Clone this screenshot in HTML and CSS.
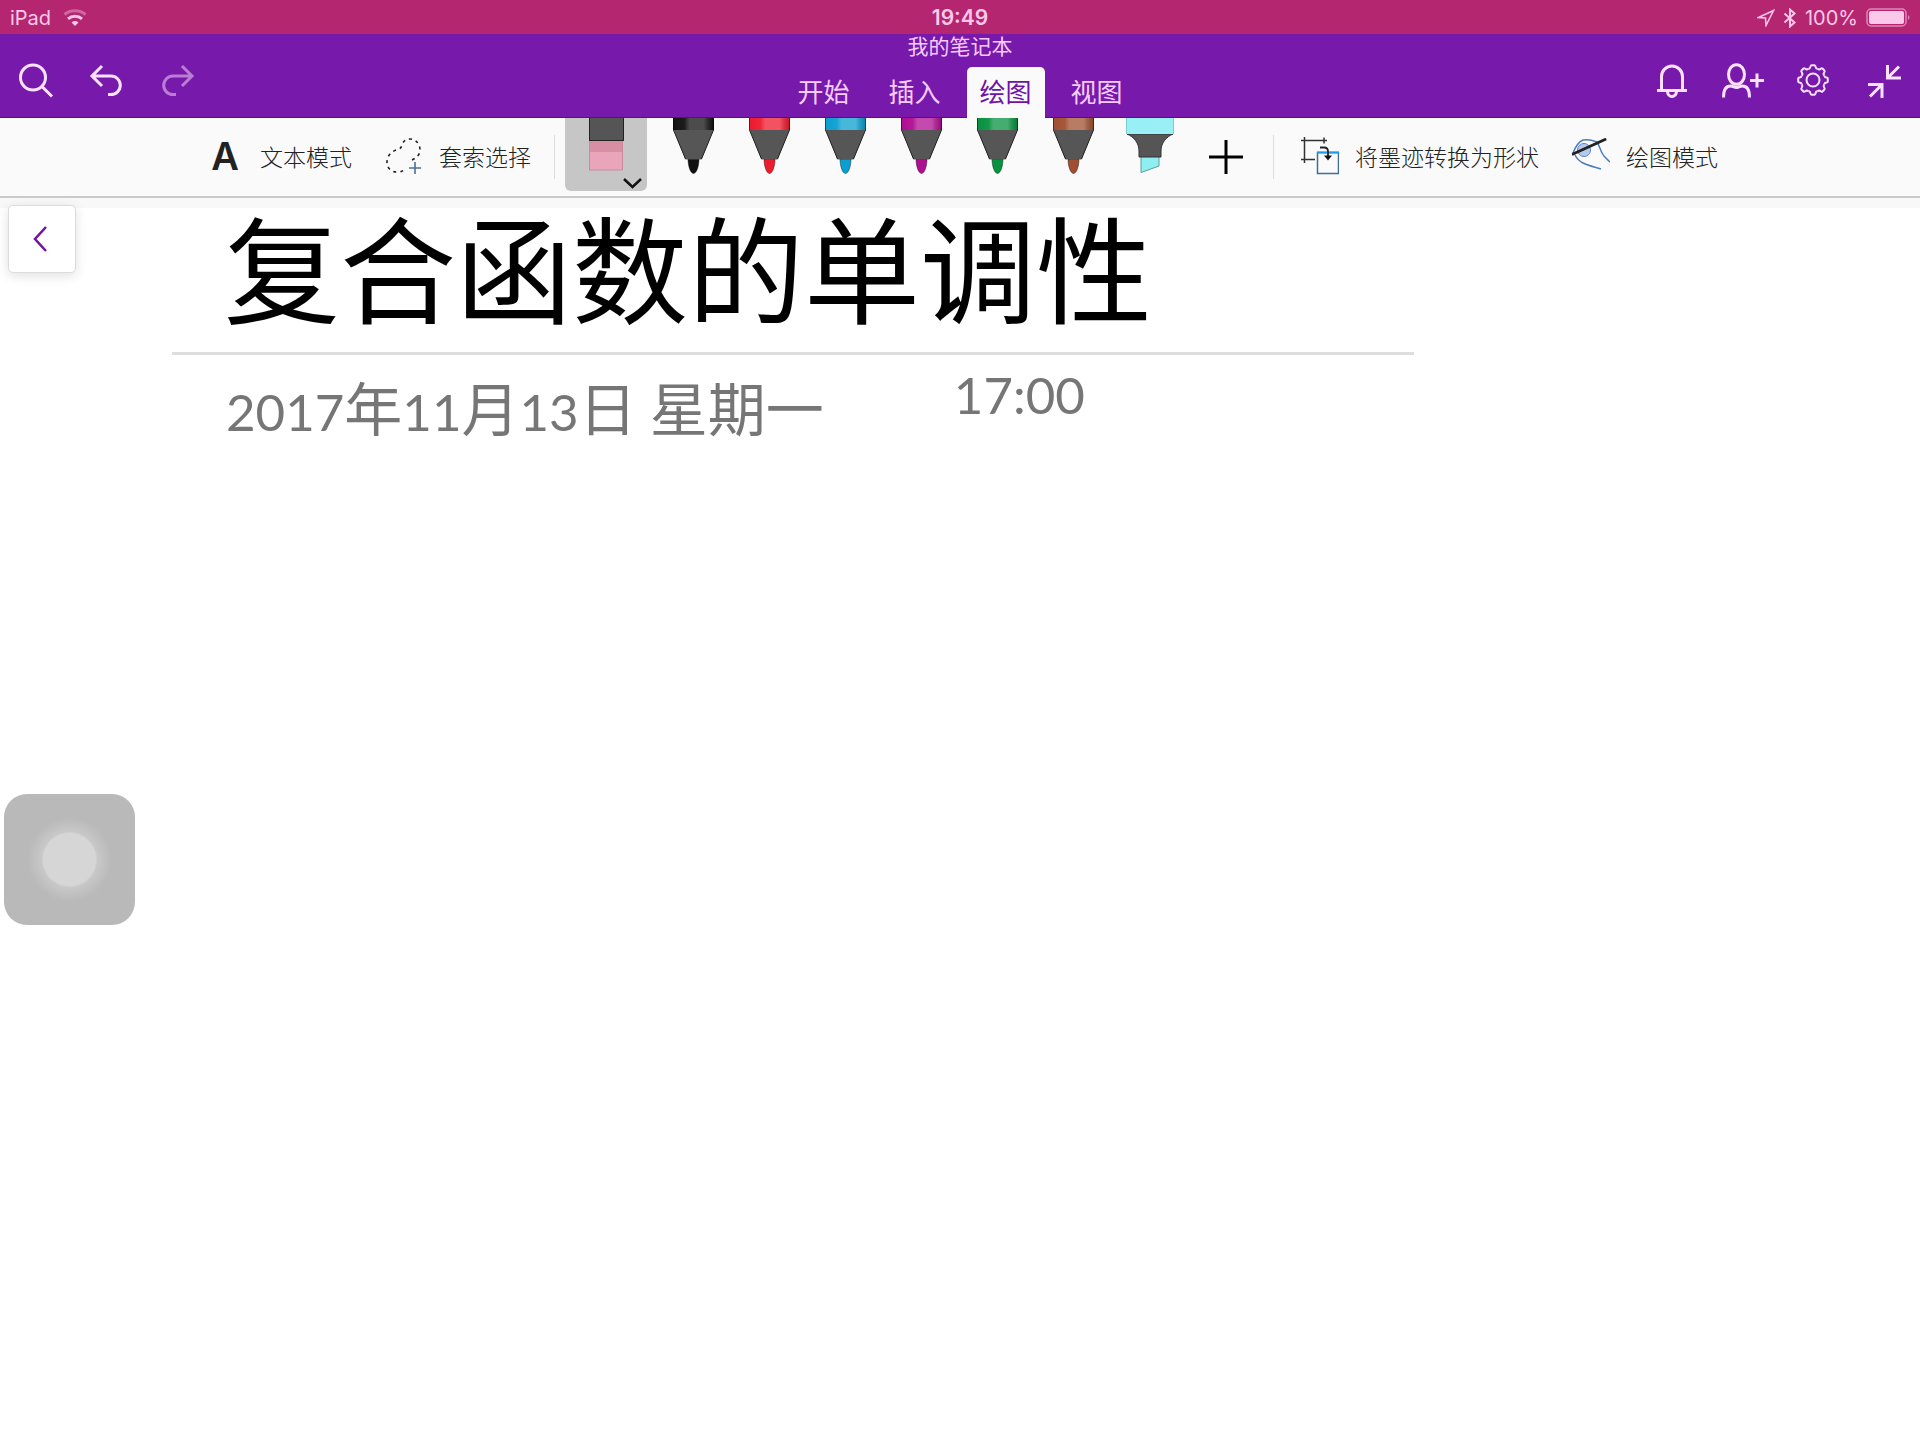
FILE: index.html
```
<!DOCTYPE html>
<html lang="zh-CN">
<head>
  <meta charset="UTF-8">
  <meta name="viewport" content="width=device-width, initial-scale=1.0">
  <title>我的笔记本</title>
  <link rel="stylesheet" href="styles.css">
</head>
<body>
  <svg class="defs" aria-hidden="true">
    <defs>
      <linearGradient id="shine">
        <stop offset="0" stop-color="#fff" stop-opacity="0"/>
        <stop offset="0.28" stop-color="#fff" stop-opacity="0.05"/>
        <stop offset="0.4" stop-color="#fff" stop-opacity="0.25"/>
        <stop offset="0.75" stop-color="#fff" stop-opacity="0.25"/>
        <stop offset="1" stop-color="#000" stop-opacity="0.15"/>
      </linearGradient>
      <symbol id="pen" viewBox="0 0 42 56">
        <path d="M15 41h11c0 6-2 14.500-5.500 14.500S15 47 15 41z" fill="currentColor" stroke="#000" stroke-opacity="0.4"/>
        <path d="M.5 12h40L28.500 41.500h-16z" fill="#565656"/>
        <path d="M.5 12l12 29M40.500 12l-12 29" stroke="#222" fill="none"/>
        <path d="M0 0h41v12H0z" fill="currentColor"/>
        <path d="M0 0h41v12H0z" fill="url(#shine)"/>
        <path d="M.5 0v12M40.500 0v12" stroke="#000" stroke-opacity="0.5"/>
      </symbol>
      <path id="tooth" d="M11.400 4.900Q13.300 4.500 13.500 2.500Q13.600 1.300 14.600 1.200H17.400Q18.400 1.300 18.500 2.500Q18.700 4.500 20.600 4.900"/>
    </defs>
  </svg>

  <div class="status">
    <div class="status-left">
      <span>iPad</span>
      <svg width="24" height="18" viewBox="0 0 24 18" fill="none" stroke="currentColor" stroke-width="3">
        <path d="M1.500 5.500C7.500.5 16.500.5 22.500 5.500" stroke-opacity="0.4"/>
        <path d="M5 9.800c4-3.500 10-3.500 14 0"/>
        <path d="M8.500 13.500Q12 10.600 15.500 13.500L12 17z" fill="currentColor" stroke="none"/>
      </svg>
    </div>
    <b class="clock">19:49</b>
    <div class="status-right">
      <svg width="18" height="18" viewBox="0 0 18 18" fill="none" stroke="currentColor" stroke-width="1.500"><path d="M16.500 1.500L1.500 8.500L8.500 9L9 16.500z"/></svg>
      <svg width="14" height="20" viewBox="0 0 14 20" fill="none" stroke="currentColor" stroke-width="2"><path d="M1.500 5.500l10 9L7 18.500v-17l4.500 4-10 9"/></svg>
      <span>100%</span>
      <svg width="44" height="20" viewBox="0 0 44 20">
        <rect x="1" y="1" width="39" height="17" rx="4" fill="none" stroke="currentColor" stroke-opacity="0.6" stroke-width="1.500"/>
        <rect x="3" y="3" width="35" height="13" rx="2" fill="currentColor"/>
        <path d="M42 7q3 2.500 0 5z" fill="currentColor" fill-opacity="0.6"/>
      </svg>
    </div>
  </div>

  <header>
    <div class="actions">
      <button aria-label="搜索">
        <svg width="36" height="36" viewBox="0 0 36 36"><circle cx="15" cy="14.500" r="12.500"/><path d="M24 23.500L34 33.500"/></svg>
      </button>
      <button aria-label="撤消">
        <svg width="36" height="36" viewBox="0 0 36 36"><path d="M13 3L3 13l10 10M3 13h19a9.300 9.300 0 0 1 0 18.600h-3"/></svg>
      </button>
      <button aria-label="恢复" disabled>
        <svg width="36" height="36" viewBox="0 0 36 36"><path d="M22 3l10 10-10 10M32 13H13a9.300 9.300 0 0 0 0 18.600h3"/></svg>
      </button>
    </div>
    <div class="center">
      <span class="notebook">我的笔记本</span>
      <nav>
        <a href="#home">开始</a>
        <a href="#insert">插入</a>
        <a href="#draw" class="active">绘图</a>
        <a href="#view">视图</a>
      </nav>
    </div>
    <div class="actions right">
      <button aria-label="通知">
        <svg width="32" height="34" viewBox="0 0 32 34"><path d="M5.500 26V12.500a10.500 10.500 0 0 1 21 0V26M1 26.500h30M11.500 27.500a4.500 5 0 0 0 9 0"/></svg>
      </button>
      <button aria-label="共享">
        <svg width="44" height="36" viewBox="0 0 44 36"><ellipse cx="15.500" cy="11.500" rx="8" ry="9.800"/><path d="M2.500 34.500c0-7 2.500-11.500 7-11.500 3 0 3 1.500 6 1.500s3-1.500 6-1.500c4.500 0 7 4.500 7 11.500M29 17.500h14M36 10.500v14"/></svg>
      </button>
      <button aria-label="设置">
        <svg class="thin" width="34" height="34" viewBox="0 0 34 34">
          <use href="#tooth"/>
          <use href="#tooth" transform="rotate(45 16 16)"/>
          <use href="#tooth" transform="rotate(90 16 16)"/>
          <use href="#tooth" transform="rotate(135 16 16)"/>
          <use href="#tooth" transform="rotate(180 16 16)"/>
          <use href="#tooth" transform="rotate(225 16 16)"/>
          <use href="#tooth" transform="rotate(270 16 16)"/>
          <use href="#tooth" transform="rotate(315 16 16)"/>
          <circle cx="16" cy="16" r="6.500"/>
        </svg>
      </button>
      <button aria-label="退出全屏">
        <svg width="36" height="36" viewBox="0 0 36 36"><path d="M20.500 2v13H34M21.500 14L32 3.500M1 21.500h14V35M14 22.500L3 33.500"/></svg>
      </button>
    </div>
  </header>

  <div class="toolbar">
    <button class="tool"><span class="letter">A</span>文本模式</button>
    <button class="tool">
      <svg width="38" height="38" viewBox="0 0 38 38" fill="none">
        <path d="M27 23c4-2 8-5 8-10 0-6-4-11-10-11-5 0-7 3-8 6-1 4-3 4-6 5-5 2-9 6-9 12 0 7 5 10 10 10 4 0 6-1 8-3" stroke="#222" stroke-width="1.600" stroke-dasharray="3 4"/>
        <path d="M30 25v12M24 31h12" stroke="#4d7193" stroke-width="1.600"/>
      </svg>套索选择
    </button>
    <span class="sep"></span>
    <button class="eraser" aria-label="橡皮擦">
      <svg width="82" height="73" viewBox="0 0 82 73">
        <path d="M24 22h34v30H24z" fill="#e9a6ba"/>
        <path d="M24 22h34v12H24z" fill="#d88ea3"/>
        <path d="M24.500 22v30h33V22" fill="none" stroke="#c98b9c"/>
        <path d="M24 0h35v23H24z" fill="#555"/>
        <path d="M24.500 0v22.500h34V0" fill="none" stroke="#222"/>
        <path d="M59 61l8.500 8 8.500-8" fill="none" stroke="#111" stroke-width="2.500"/>
      </svg>
    </button>
    <button class="pen black" aria-label="黑色笔"><svg width="42" height="56"><use href="#pen"/></svg></button>
    <button class="pen red" aria-label="红色笔"><svg width="42" height="56"><use href="#pen"/></svg></button>
    <button class="pen blue" aria-label="蓝色笔"><svg width="42" height="56"><use href="#pen"/></svg></button>
    <button class="pen purple" aria-label="紫色笔"><svg width="42" height="56"><use href="#pen"/></svg></button>
    <button class="pen green" aria-label="绿色笔"><svg width="42" height="56"><use href="#pen"/></svg></button>
    <button class="pen brown" aria-label="棕色笔"><svg width="42" height="56"><use href="#pen"/></svg></button>
    <button class="pen" aria-label="荧光笔">
      <svg width="48" height="56" viewBox="0 0 48 56">
        <path d="M15 38h18v10L15 54.500z" fill="#8eeef0"/>
        <path d="M15 38v16.500L33 48V38" fill="none" stroke="#5f9c9e"/>
        <path d="M1 16h46c-7 3-12 9-12 17v6H13v-6C13 25 8 19 1 16z" fill="#555" stroke="#333"/>
        <path d="M0 0h48v16H0z" fill="#98eff5"/>
        <path d="M.5 0v16M47.500 0v16" stroke="#7ccdd2"/>
      </svg>
    </button>
    <button class="pen add" aria-label="添加笔">
      <svg width="34" height="34" viewBox="0 0 34 34"><path d="M17 0v34M0 17h34" stroke="#000" stroke-width="3"/></svg>
    </button>
    <span class="sep"></span>
    <button class="tool">
      <svg width="38" height="38" viewBox="0 0 38 38" fill="none">
        <path d="M3.500 0v26M0 3.500h26M23 .5v6M0 22.500h14" stroke="#333" stroke-width="1.500"/>
        <rect x="16.500" y="15.500" width="21" height="21" stroke="#3a6d9e" stroke-width="1.500"/>
        <path d="M16 15.500h22" stroke="#1b9cf0" stroke-width="2"/>
        <path d="M19 10.500h4q4 0 4 4v5" stroke="#222" stroke-width="1.800"/>
        <path d="M23 18.500h8l-4 5z" fill="#111"/>
      </svg>将墨迹转换为形状
    </button>
    <button class="tool">
      <svg width="38" height="38" viewBox="0 0 38 38" fill="none">
        <circle cx="12" cy="13" r="6.500" fill="#b5cbea" stroke="#5a82c8"/>
        <path d="M1 16C3 11 6 5 11 3c5-1 9 0 14 2 2 3 3 7 5 11s5 6 8 9M3 18c2 4 4 6 8 8 6 3 12 4 18 6" stroke="#4a7cc0" stroke-width="1.500"/>
        <path d="M1 17L33 2.500" stroke="#222" stroke-width="3" stroke-linecap="round"/>
      </svg>绘图模式
    </button>
  </div>

  <main>
    <button class="back" aria-label="返回">
      <svg width="16" height="28" viewBox="0 0 16 28"><path d="M14 2L3 14l11 12" fill="none" stroke="#7012a8" stroke-width="2.500"/></svg>
    </button>
    <article class="note">
      <h1>复合函数的单调性</h1>
      <div class="meta">
        <span class="date"><i>2017</i>年<i>11</i>月<i>13</i>日<i> </i>星期一</span>
        <span class="time">17:00</span>
      </div>
    </article>
  </main>

  <button class="assistive" aria-label="AssistiveTouch"></button>
</body>
</html>
```
FILE: styles.css
```
* {
  box-sizing: border-box;
}
body {
  margin: 0;
  min-height: 100vh;
  background: #fff;
  font-family: Inter, "Noto Sans CJK SC", sans-serif;
}
button {
  border: none;
  padding: 0;
  background: none;
  color: inherit;
  font: inherit;
}
svg {
  display: block;
  flex: none;
}
.defs {
  position: absolute;
  width: 0;
  height: 0;
}

/* status bar */
.status {
  display: grid;
  grid-template-columns: 1fr auto 1fr;
  align-items: center;
  height: 34px;
  padding: 1px 10px 0 10px;
  background: #b4266f;
  color: #fbc8ea;
  font-size: 20px;
}
.status-left,
.status-right {
  display: flex;
  align-items: center;
  gap: 12px;
}
.status-right {
  justify-content: flex-end;
  gap: 8px;
}
.clock {
  font-size: 21px;
  font-weight: 600;
}

/* header */
header {
  display: grid;
  grid-template-columns: 1fr auto 1fr;
  height: 84px;
  background: #7719aa;
  border-bottom: 1px solid #6a0098;
  color: #fbe2ff;
}
.actions {
  display: flex;
  padding-top: 10px;
}
.actions.right {
  justify-content: flex-end;
}
.actions button {
  display: flex;
  align-items: center;
  justify-content: center;
  width: 71px;
}
.actions button:disabled {
  opacity: 0.5;
}
.actions svg {
  fill: none;
  stroke: currentColor;
  stroke-width: 3;
}
.actions .thin {
  stroke-width: 2;
}
.center {
  display: flex;
  flex-direction: column;
  align-items: center;
  justify-content: space-between;
  color: #f6ccff;
}
.notebook {
  font-size: 21px;
  line-height: 26px;
}
nav {
  display: flex;
  gap: 13px;
  margin-bottom: -1px;
}
nav a {
  width: 78px;
  font-size: 26px;
  line-height: 51px;
  text-align: center;
  text-decoration: none;
  color: inherit;
}
nav .active {
  background: #fafafa;
  border-radius: 5px 5px 0 0;
  color: #7012a8;
}

/* drawing tools */
.toolbar {
  display: flex;
  justify-content: center;
  height: 80px;
  padding-left: 4px;
  background: #fafafa;
  border-bottom: 2px solid #cacaca;
}
.tool {
  display: flex;
  align-items: center;
  gap: 16px;
  padding-bottom: 2px;
  color: #222;
  font-size: 23px;
  font-weight: 300;
  white-space: nowrap;
}
.tool + .tool {
  margin-left: 33px;
}
.letter {
  width: 38px;
  font-size: 38px;
  font-weight: 600;
  text-align: center;
}
.sep {
  width: 1px;
  height: 44px;
  margin: 17px 10px 0 23px;
  background: #dcdcdc;
}
.eraser {
  width: 82px;
  height: 73px;
  margin-right: 9px;
  border-radius: 0 0 6px 6px;
  background: #c6c6c6;
}
.pen {
  display: flex;
  justify-content: center;
  align-items: flex-start;
  width: 76px;
}
.black { color: #111; }
.red { color: #ee1a2e; }
.blue { color: #0a9fd0; }
.purple { color: #b00d92; }
.green { color: #07923f; }
.brown { color: #a04f30; }
.add {
  align-items: center;
}
.add + .sep {
  margin: 17px 27px 0 9px;
}

/* page */
main {
  position: relative;
  border-top: 10px solid #f8f8f8;
}
.back {
  position: absolute;
  top: -3px;
  left: 8px;
  display: flex;
  align-items: center;
  justify-content: center;
  width: 68px;
  height: 68px;
  padding-right: 4px;
  border: 1px solid #dcdcdc;
  border-radius: 5px;
  background: #fff;
  box-shadow: 0 3px 12px rgba(0, 0, 0, 0.12);
}
.note {
  width: 1242px;
  max-width: calc(100% - 172px);
  margin-left: 172px;
}
h1 {
  margin: 0;
  padding: 0 0 32px 52px;
  border-bottom: 3px solid #dedede;
  font-family: "Noto Sans CJK SC", sans-serif;
  font-size: 116px;
  font-weight: 400;
  line-height: 112px;
  color: #000;
}
.meta {
  display: flex;
  align-items: flex-start;
  gap: 130px;
  padding: 8px 0 0 54px;
  color: #767676;
  font-family: Lato, "Noto Sans CJK SC", sans-serif;
}
.date {
  padding-top: 6px;
  font-size: 58px;
  line-height: 80px;
}
.date i {
  font-size: 51px;
  font-style: normal;
}
.time {
  font-size: 51px;
  line-height: 64px;
}

.assistive {
  position: fixed;
  top: 794px;
  left: 4px;
  width: 131px;
  height: 131px;
  border-radius: 23px;
  background: radial-gradient(circle, #d6d6d6 26px, #c8c8c8 28px, #b9b9b9 42px);
}
```
